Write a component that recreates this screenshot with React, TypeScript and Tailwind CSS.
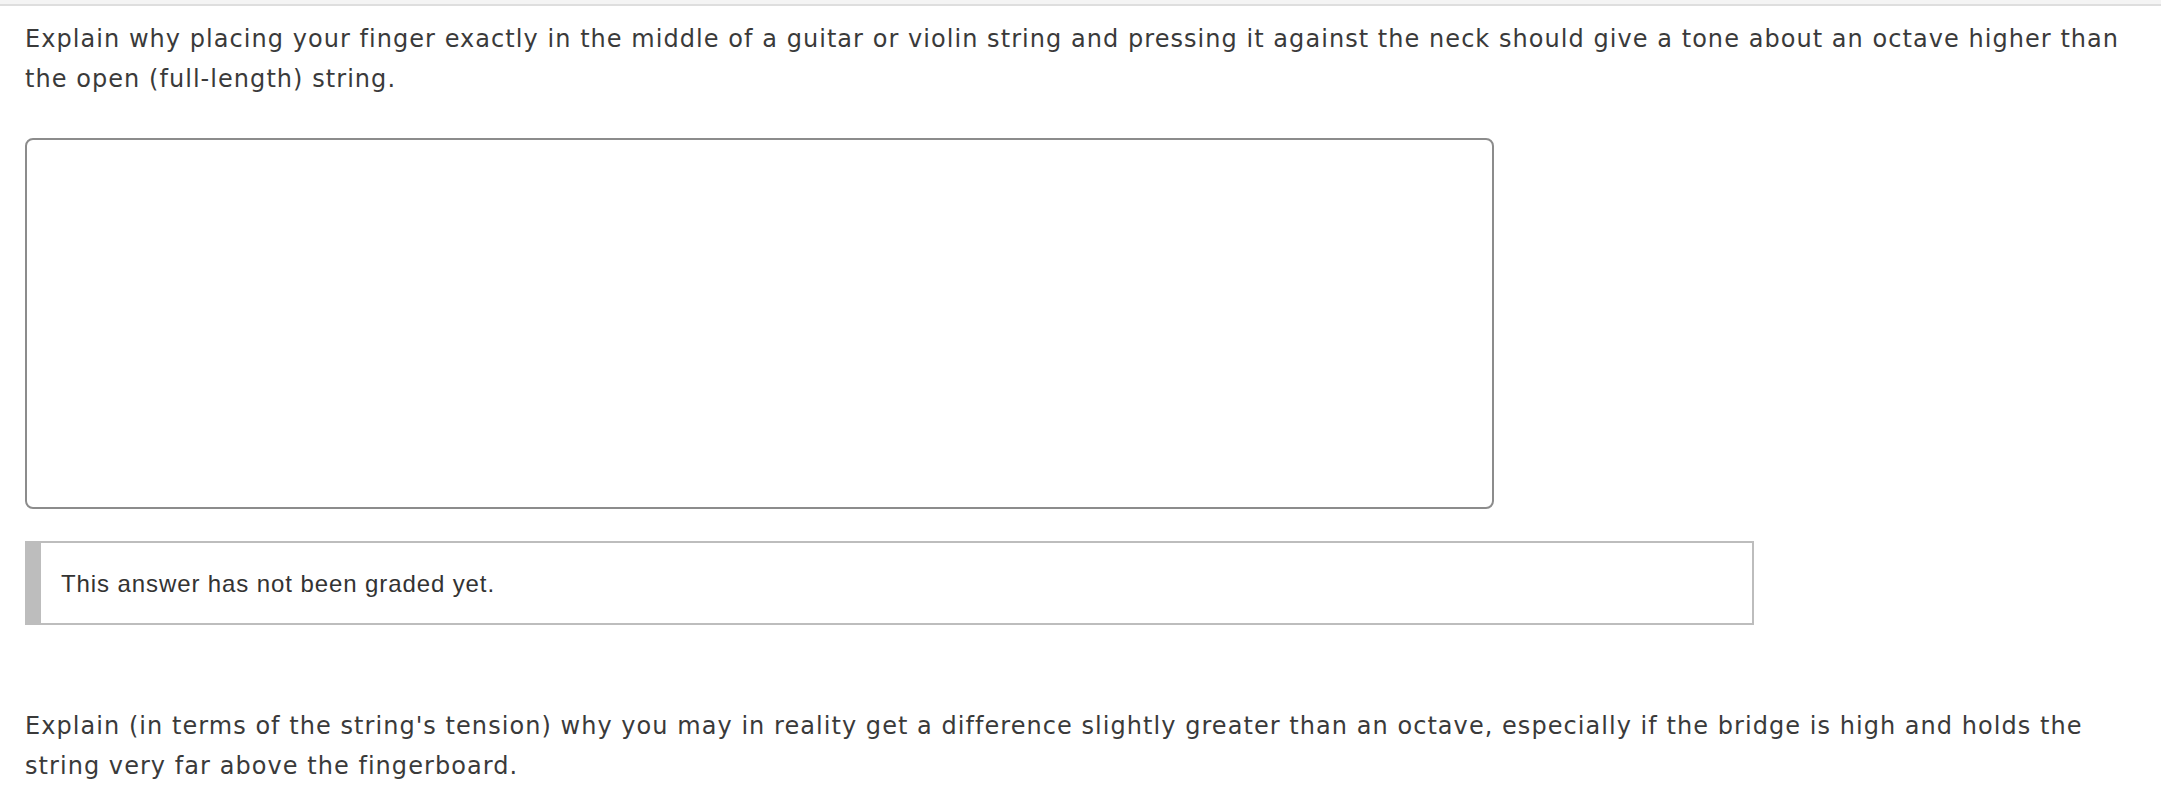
import React, { useState } from 'react';

const questionFont = { fontFamily: '"DejaVu Sans", Verdana, sans-serif' };

export default function App() {
  const [answer, setAnswer] = useState('');

  return (
    <div className="min-h-screen bg-white text-[#3a3a3a]">
      <div className="h-[4px] bg-[#f4f4f4] border-b-2 border-[#dedede] box-content" />
      <div className="pl-[25px] pr-[20px] pt-[13px]">
        <p
          className="text-[24px] leading-[40px] tracking-[1.05px] font-['DejaVu_Sans',Verdana,sans-serif]"
          style={questionFont}
        >
          Explain why placing your finger exactly in the middle of a guitar or violin string and pressing it against the neck should give a tone about an octave higher than the open (full-length) string.
        </p>

        <textarea
          className="mt-[39px] block w-[1469px] h-[371px] resize-none rounded-[8px] border-2 border-[#8c8c8c] bg-white p-3 text-[24px] outline-none"
          value={answer}
          onChange={(e) => setAnswer(e.target.value)}
        />

        <div className="mt-[32px] flex h-[84px] w-[1729px] items-center border-2 border-l-[16px] border-[#bdbdbd] bg-white">
          <span className="pl-[20px] pt-[2px] text-[24px] tracking-[0.9px] text-[#333333] font-['Liberation_Sans',Arial,sans-serif]">
            This answer has not been graded yet.
          </span>
        </div>

        <p
          className="mt-[81px] text-[24px] leading-[40px] tracking-[1.05px] font-['DejaVu_Sans',Verdana,sans-serif]"
          style={questionFont}
        >
          Explain (in terms of the string's tension) why you may in reality get a difference slightly greater than an octave, especially if the bridge is high and holds the string very far above the fingerboard.
        </p>
      </div>
    </div>
  );
}
